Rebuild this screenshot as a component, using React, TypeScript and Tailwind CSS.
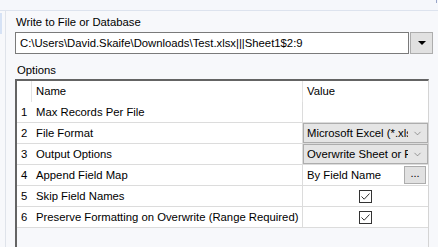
import { ChevronDown } from 'lucide-react'

const rows = [
  { n: 1, name: 'Max Records Per File', kind: 'blank' },
  { n: 2, name: 'File Format', kind: 'select', value: 'Microsoft Excel (*.xlsx)' },
  { n: 3, name: 'Output Options', kind: 'select', value: 'Overwrite Sheet or Range' },
  { n: 4, name: 'Append Field Map', kind: 'button', value: 'By Field Name' },
  { n: 5, name: 'Skip Field Names', kind: 'check' },
  { n: 6, name: 'Preserve Formatting on Overwrite (Range Required)', kind: 'check' },
]

function Check() {
  return (
    <span className="flex h-[13px] w-[13px] items-center justify-center border border-[#333] bg-white">
      <svg width="11" height="11" viewBox="0 0 11 11">
        <path d="M1.5 5.5 L4.2 8.2 L9.5 2.5" fill="none" stroke="#333" strokeWidth="1" />
      </svg>
    </span>
  )
}

export default function App() {
  return (
    <div
      className="h-[247px] w-[438px] overflow-hidden bg-[#f7f8fb] text-[11.3px] text-black"
      style={{ fontFamily: '"Liberation Sans", Arial, sans-serif' }}
    >
      <div className="relative h-[11px] border-b border-[#dde3ee] bg-[#f5f7fb]">
        <span className="absolute right-[1px] top-0 h-[3px] w-px bg-[#9aa6c8]" />
      </div>
      <div className="flex h-[236px]">
        {/* left gutter */}
        <div className="relative w-[6px] shrink-0 border-r border-[#dfe3ea]">
          <span className="absolute left-0 top-[2px] h-[21px] w-[2px] bg-[#d6e2f5]" />
        </div>
        <div className="flex min-w-0 flex-1 flex-col pl-[9px]">
          <div className="mt-[4px] h-[15px] pl-[1px] leading-[15px]">Write to File or Database</div>
          <div className="mt-[2px] flex h-[22px] items-stretch">
            <div className="flex w-[394px] items-center border border-[#7a7a7a] bg-white pl-[4px]">
              C:\Users\David.Skaife\Downloads\Test.xlsx|||Sheet1$2:9
            </div>
            <button className="ml-[1px] flex w-[23px] items-center justify-center border border-[#adadad] bg-[#e1e1e1]">
              <svg width="8" height="4" viewBox="0 0 8 4">
                <path d="M0 0 H8 L4 4 Z" fill="#000" />
              </svg>
            </button>
          </div>
          <div className="ml-[2px] mt-[9px] h-[15px] leading-[15px]">Options</div>
          <div className="mt-[1px] flex w-[414px] flex-1 flex-col border-l-2 border-t-2 border-r border-l-[#646464] border-t-[#646464] border-r-[#d4d4d4]">
            <div className="flex h-[21px] bg-white">
              <div className="w-[15px] shrink-0 border-r border-[#e3e3e3]" />
              <div className="w-[271px] shrink-0 border-r border-[#e3e3e3] pl-[4px] leading-[21px]">Name</div>
              <div className="flex-1 pl-[4px] leading-[21px]">Value</div>
            </div>
            {rows.map((r) => (
              <div key={r.n} className="flex h-[21px] border-b border-[#dcdcdc] bg-white">
                <div className="w-[15px] shrink-0 pl-[4px] leading-[20px]">{r.n}</div>
                <div className="w-[271px] shrink-0 overflow-hidden whitespace-nowrap border-r border-[#dcdcdc] pl-[4px] leading-[20px]">
                  {r.name}
                </div>
                <div className="flex min-w-0 flex-1 items-center">
                  {r.kind === 'select' && (
                    <div className="flex h-full w-full items-center border border-[#adadad] bg-[#e5e5e5] pl-[3px]">
                      <span className="min-w-0 flex-1 overflow-hidden whitespace-nowrap">{r.value}</span>
                      <ChevronDown size={11} strokeWidth={1.2} className="mx-[4px] shrink-0 text-[#555]" />
                    </div>
                  )}
                  {r.kind === 'button' && (
                    <div className="flex h-full w-full items-center">
                      <span className="flex-1 pl-[4px]">{r.value}</span>
                      <span className="mr-[2px] flex h-[18px] w-[22px] items-center justify-center border border-[#adadad] bg-[#e1e1e1] pb-[4px] text-[11px]">
                        ...
                      </span>
                    </div>
                  )}
                  {r.kind === 'check' && (
                    <div className="flex w-full justify-center">
                      <Check />
                    </div>
                  )}
                </div>
              </div>
            ))}
          </div>
        </div>
      </div>
    </div>
  )
}
